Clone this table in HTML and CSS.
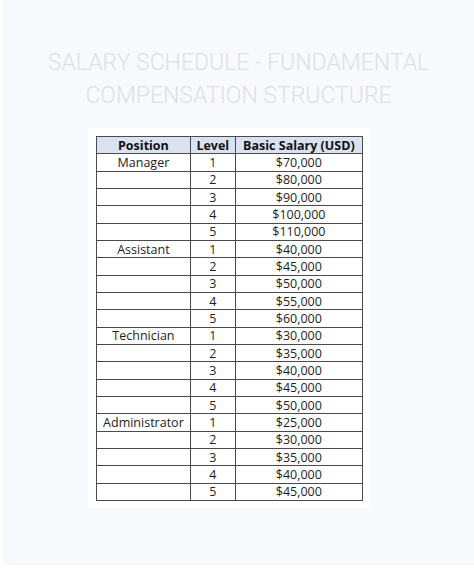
FILE: index.html
```html
<!DOCTYPE html>
<html>
<head>
<meta charset="utf-8">
<link rel="stylesheet" href="styles.css">
</head>
<body>
<div class="panel">
  <h1 class="title">SALARY SCHEDULE - FUNDAMENTAL<br>COMPENSATION STRUCTURE</h1>
  <div class="card">
    <table class="sheet">
      <colgroup><col class="c1"><col class="c2"><col class="c3"></colgroup>
      <thead>
        <tr><th>Position</th><th>Level</th><th>Basic Salary (USD)</th></tr>
      </thead>
      <tbody>
        <tr><td>Manager</td><td>1</td><td>$70,000</td></tr>
        <tr><td></td><td>2</td><td>$80,000</td></tr>
        <tr><td></td><td>3</td><td>$90,000</td></tr>
        <tr><td></td><td>4</td><td>$100,000</td></tr>
        <tr><td></td><td>5</td><td>$110,000</td></tr>
        <tr><td>Assistant</td><td>1</td><td>$40,000</td></tr>
        <tr><td></td><td>2</td><td>$45,000</td></tr>
        <tr><td></td><td>3</td><td>$50,000</td></tr>
        <tr><td></td><td>4</td><td>$55,000</td></tr>
        <tr><td></td><td>5</td><td>$60,000</td></tr>
        <tr><td>Technician</td><td>1</td><td>$30,000</td></tr>
        <tr><td></td><td>2</td><td>$35,000</td></tr>
        <tr><td></td><td>3</td><td>$40,000</td></tr>
        <tr><td></td><td>4</td><td>$45,000</td></tr>
        <tr><td></td><td>5</td><td>$50,000</td></tr>
        <tr><td>Administrator</td><td>1</td><td>$25,000</td></tr>
        <tr><td></td><td>2</td><td>$30,000</td></tr>
        <tr><td></td><td>3</td><td>$35,000</td></tr>
        <tr><td></td><td>4</td><td>$40,000</td></tr>
        <tr><td></td><td>5</td><td>$45,000</td></tr>
      </tbody>
    </table>
  </div>
</div>
</body>
</html>
```

FILE: styles.css
```css
html, body {
  margin: 0;
  padding: 0;
  background: #ffffff;
}
.panel {
  margin: 0 0 4px 3px;
  height: 565px;
  background: #f8f9fc;
  border-radius: 0 0 0 6px;
  overflow: hidden;
}
.title {
  margin: 0;
  padding-top: 46px;
  height: 83px;
  box-sizing: border-box;
  text-align: center;
  font-family: "Roboto", sans-serif;
  font-weight: 300;
  font-size: 23px;
  line-height: 33px;
  color: #dcdfe8;
  letter-spacing: 0;
}
.card {
  margin: 45px 0 0 85px;
  width: 282px;
  background: #ffffff;
  padding: 8px 7px 7px 8px;
  box-sizing: border-box;
}
.sheet {
  border-collapse: collapse;
  width: 267px;
  font-family: "Open Sans", sans-serif;
  font-size: 12.5px;
  color: #1e1e1e;
}
.c1 { width: 94px; }
.c2 { width: 45px; }
.c3 { width: 128px; }
.sheet th, .sheet td {
  border: 1px solid #4a4a4a;
  height: 16.33px;
  padding: 0;
  text-align: center;
  line-height: 15px;
}
.sheet th {
  background: #dae2f1;
  font-weight: 700;
  color: #111;
}
```
